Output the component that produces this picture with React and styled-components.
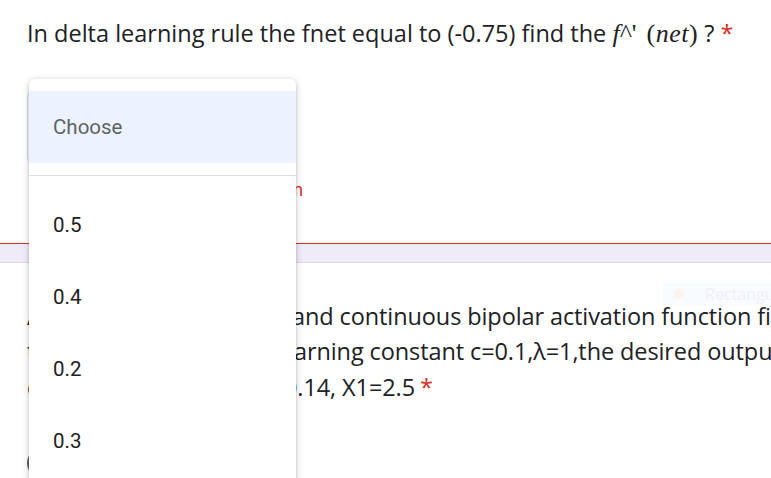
import React from 'react';
import styled, { createGlobalStyle } from 'styled-components';

const Global = createGlobalStyle`
  html, body { margin: 0; padding: 0; }
  body {
    background: #f0ebf8;
    overflow: hidden;
    font-family: "Open Sans", "Liberation Sans", sans-serif;
  }
`;

const Page = styled.div`
  position: relative;
  width: 771px;
  height: 478px;
  overflow: hidden;
  display: flex;
  flex-direction: column;
  gap: 18px;
`;

const Card = styled.section`
  background: #fff;
  padding: ${p => p.$pad};
  border-top: ${p => (p.$top ? '1px solid #dadce0' : 'none')};
  border-bottom: ${p => (p.$error ? '1px solid #d93025' : 'none')};
  flex: ${p => (p.$grow ? '1 0 auto' : 'none')};
  display: flex;
  flex-direction: column;
`;

const Title = styled.div`
  font-size: 23.5px;
  line-height: 35.5px;
  height: 35.5px;
  color: #202124;
  white-space: nowrap;
`;

const MathExpr = styled.span`
  font-family: "Liberation Serif", "DejaVu Serif", serif;
  font-size: 26px;
  line-height: 1;
`;

const MathVar = styled.span`
  font-style: italic;
`;

const MathGroup = styled.span`
  margin-left: 10px;
  letter-spacing: 0.5px;
`;

const Star = styled.span`
  color: #d93025;
  margin-left: ${p => p.$gap || 8}px;
`;

const SelectBox = styled.div`
  margin-top: 39.5px;
  width: 250px;
  height: 72px;
  box-sizing: border-box;
  border: 1px solid #dadce0;
  border-radius: 6px;
`;

const ErrorRow = styled.div`
  margin-top: 8.5px;
  height: 35px;
  display: flex;
  align-items: center;
  gap: 33px;
  color: #d93025;
  font-family: Roboto, "Liberation Sans", sans-serif;
  font-size: 17.8px;
  white-space: nowrap;
`;

const QLine = styled.div`
  display: flex;
  white-space: nowrap;
  font-size: 23.5px;
  line-height: 35.5px;
  height: 35.5px;
  letter-spacing: -0.1px;
  color: #202124;
`;

const Lead = styled.span`
  flex: none;
  width: ${p => p.$w}px;
  overflow: hidden;
`;

const OptionRow = styled.div`
  margin-top: 43px;
  display: flex;
  align-items: center;
  gap: 18px;
  font-family: Roboto, "Liberation Sans", sans-serif;
  font-size: 20.5px;
  color: #202124;
`;

const Radio = styled.span`
  width: 30px;
  height: 30px;
  box-sizing: border-box;
  border: 3px solid #5f6368;
  border-radius: 50%;
`;

const Menu = styled.div`
  position: absolute;
  left: 29px;
  top: 79px;
  width: 267px;
  background: #fff;
  border-radius: 6px;
  padding: 12px 0;
  box-shadow: 0 3px 3px rgba(0, 0, 0, 0.14), 0 4px 2px -3px rgba(0, 0, 0, 0.12),
    0 1px 7px rgba(0, 0, 0, 0.2);
`;

const MenuItem = styled.div`
  height: 72px;
  display: flex;
  align-items: center;
  padding-left: 24px;
  font-family: Roboto, "Liberation Sans", sans-serif;
  font-size: 20.5px;
  color: ${p => (p.$placeholder ? '#5f6368' : '#202124')};
  background: ${p => (p.$selected ? 'rgba(66, 133, 244, 0.1)' : 'transparent')};
`;

const Divider = styled.div`
  height: 1px;
  background: #e0e0e0;
  margin: 12px 0 13px;
`;

const Chip = styled.div`
  position: absolute;
  left: 663px;
  top: 283px;
  width: 150px;
  height: 22px;
  background: #f8fbff;
  display: flex;
  align-items: center;
  padding-left: 11px;
  gap: 21px;
  font-family: "Open Sans", sans-serif;
  font-size: 16px;
  color: #eff1f5;
  white-space: nowrap;
  overflow: hidden;
`;

const ChipDot = styled.span`
  width: 10px;
  height: 10px;
  border-radius: 50%;
  background: #fdf2ee;
  flex: none;
`;

const ErrorIcon = () => (
  <svg width="35" height="35" viewBox="0 0 24 24" fill="#d93025">
    <path d="M12 2C6.48 2 2 6.48 2 12s4.48 10 10 10 10-4.48 10-10S17.52 2 12 2zm1 15h-2v-2h2v2zm0-4h-2V7h2v6z" />
  </svg>
);

const options = ['0.5', '0.4', '0.2', '0.3'];

export default function App() {
  return (
    <>
      <Global />
      <Page>
        <Card $error $pad="16px 0 36.5px 27px">
          <Title>
            In delta learning rule the fnet equal to (-0.75) find the{' '}
            <MathExpr>
              <MathVar>f</MathVar>^'
              <MathGroup>
                (<MathVar>net</MathVar>)
              </MathGroup>
            </MathExpr>{' '}
            ?<Star $gap={6}>*</Star>
          </Title>
          <SelectBox />
          <ErrorRow>
            <ErrorIcon />
            <span>This is a required question</span>
          </ErrorRow>
        </Card>
        <Card $top $grow $pad="35.5px 0 0 27px">
          <QLine>
            <Lead $w={265}>Assume a neuron with two inputs</Lead>
            <span>and continuous bipolar activation function find the output</span>
          </QLine>
          <QLine>
            <Lead $w={267}>the output after one step with le</Lead>
            <span>arning constant c=0.1,λ=1,the desired output</span>
          </QLine>
          <QLine>
            <Lead $w={257}>d=0.8, and the inputs X0=</Lead>
            <span>
              0.14, X1=2.5<Star $gap={5}>*</Star>
            </span>
          </QLine>
          <OptionRow>
            <Radio />
            <span>0.64</span>
          </OptionRow>
        </Card>
        <Chip>
          <ChipDot />
          <span>Rectangular Snip</span>
        </Chip>
        <Menu>
          <MenuItem $selected $placeholder>
            Choose
          </MenuItem>
          <Divider />
          {options.map(o => (
            <MenuItem key={o}>{o}</MenuItem>
          ))}
        </Menu>
      </Page>
    </>
  );
}
